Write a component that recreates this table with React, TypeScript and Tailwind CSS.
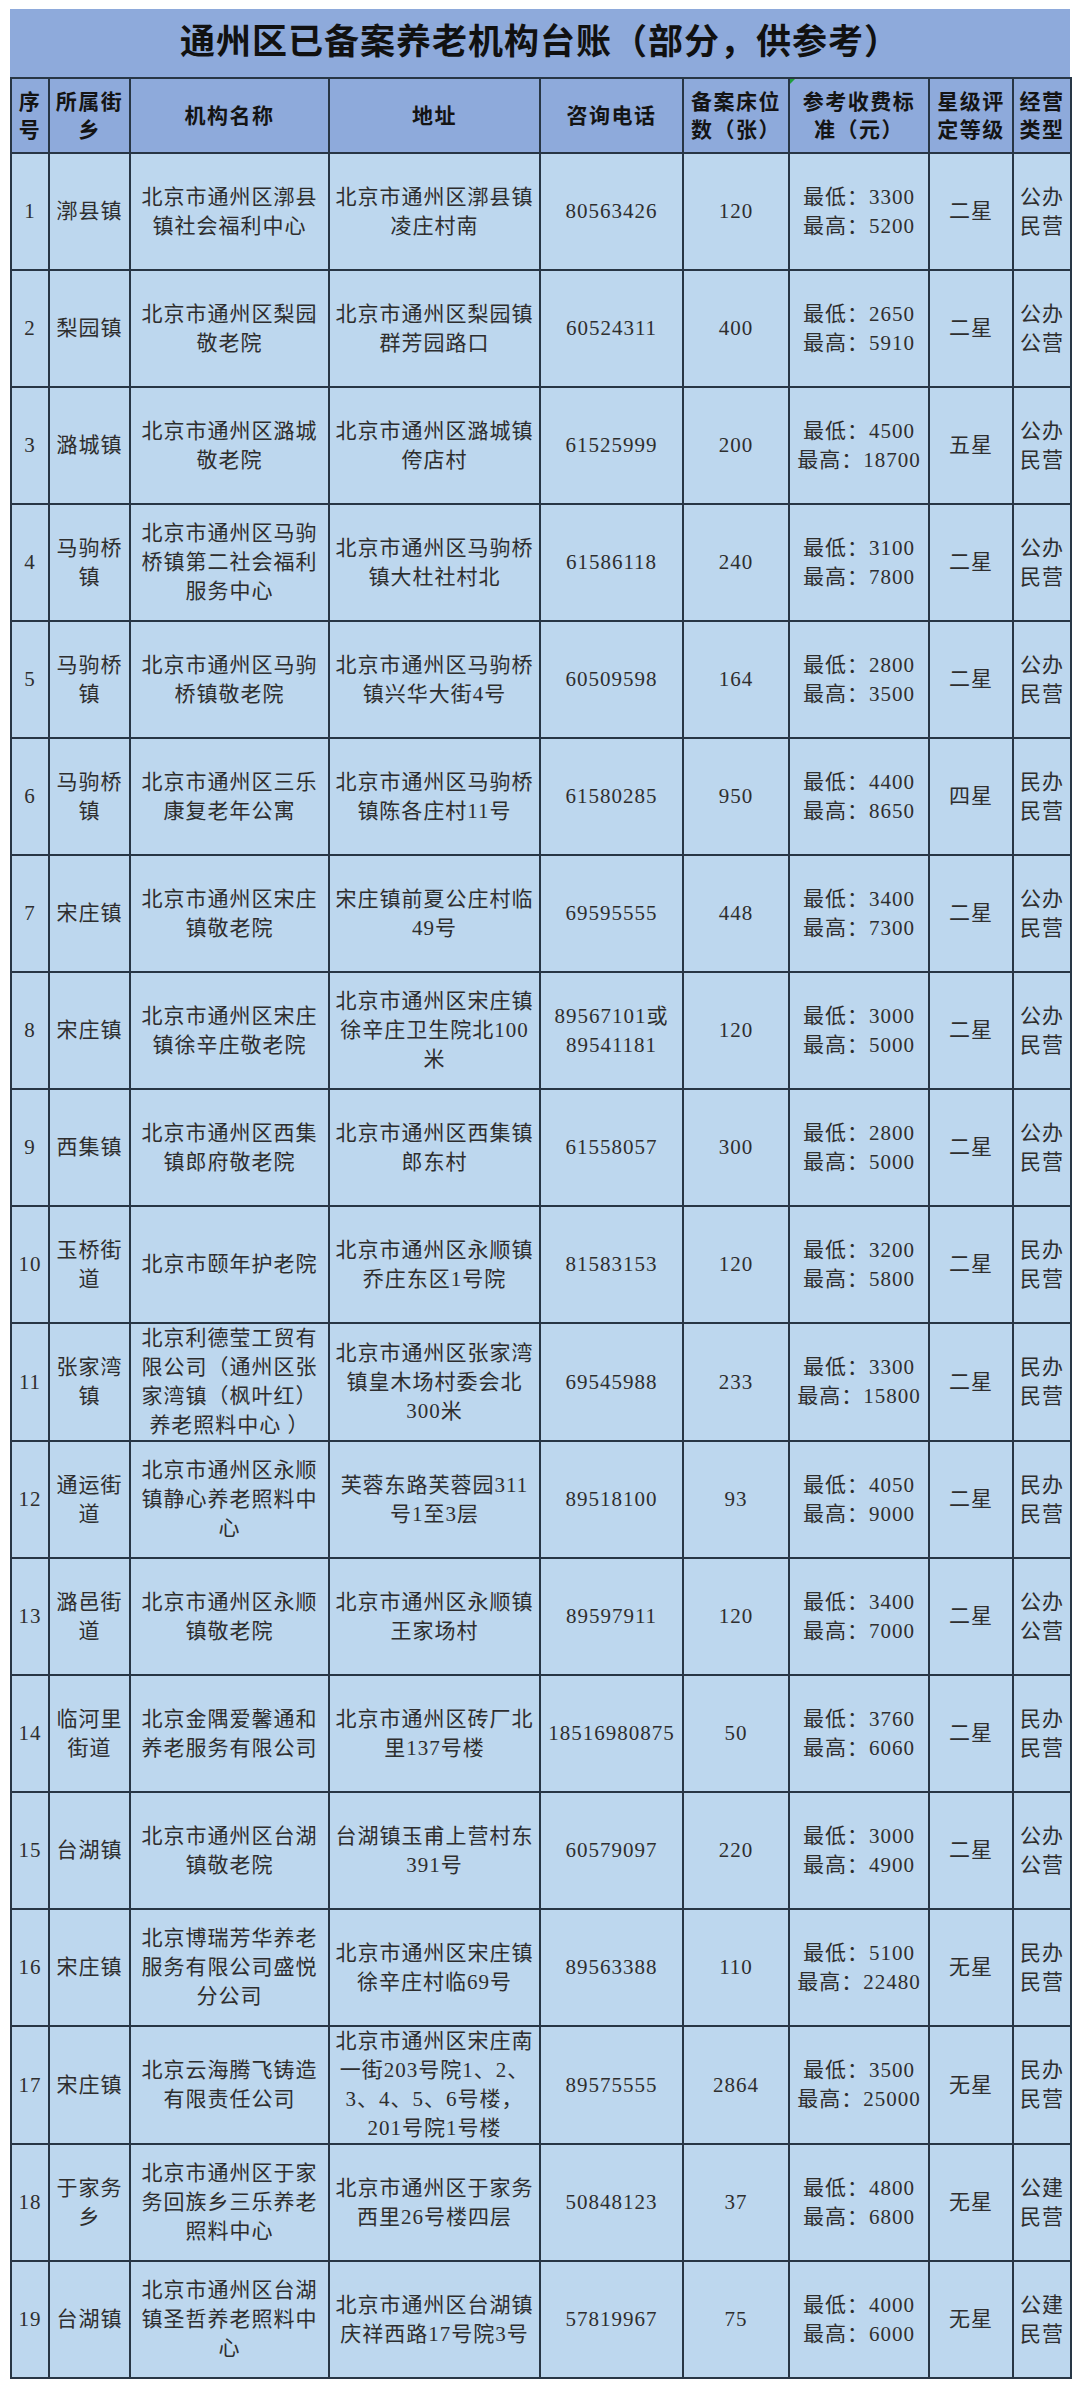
type Row = {
  no: number;
  town: string;
  name: string;
  addr: string;
  phone: string;
  beds: string;
  low: string;
  high: string;
  star: string;
  kind: string;
};

const rows: Row[] = [
  { no: 1, town: "漷县镇", name: "北京市通州区漷县镇社会福利中心", addr: "北京市通州区漷县镇凌庄村南", phone: "80563426", beds: "120", low: "3300", high: "5200", star: "二星", kind: "公办民营" },
  { no: 2, town: "梨园镇", name: "北京市通州区梨园敬老院", addr: "北京市通州区梨园镇群芳园路口", phone: "60524311", beds: "400", low: "2650", high: "5910", star: "二星", kind: "公办公营" },
  { no: 3, town: "潞城镇", name: "北京市通州区潞城敬老院", addr: "北京市通州区潞城镇侉店村", phone: "61525999", beds: "200", low: "4500", high: "18700", star: "五星", kind: "公办民营" },
  { no: 4, town: "马驹桥镇", name: "北京市通州区马驹桥镇第二社会福利服务中心", addr: "北京市通州区马驹桥镇大杜社村北", phone: "61586118", beds: "240", low: "3100", high: "7800", star: "二星", kind: "公办民营" },
  { no: 5, town: "马驹桥镇", name: "北京市通州区马驹桥镇敬老院", addr: "北京市通州区马驹桥镇兴华大街4号", phone: "60509598", beds: "164", low: "2800", high: "3500", star: "二星", kind: "公办民营" },
  { no: 6, town: "马驹桥镇", name: "北京市通州区三乐康复老年公寓", addr: "北京市通州区马驹桥镇陈各庄村11号", phone: "61580285", beds: "950", low: "4400", high: "8650", star: "四星", kind: "民办民营" },
  { no: 7, town: "宋庄镇", name: "北京市通州区宋庄镇敬老院", addr: "宋庄镇前夏公庄村临49号", phone: "69595555", beds: "448", low: "3400", high: "7300", star: "二星", kind: "公办民营" },
  { no: 8, town: "宋庄镇", name: "北京市通州区宋庄镇徐辛庄敬老院", addr: "北京市通州区宋庄镇徐辛庄卫生院北100米", phone: "89567101或89541181", beds: "120", low: "3000", high: "5000", star: "二星", kind: "公办民营" },
  { no: 9, town: "西集镇", name: "北京市通州区西集镇郎府敬老院", addr: "北京市通州区西集镇郎东村", phone: "61558057", beds: "300", low: "2800", high: "5000", star: "二星", kind: "公办民营" },
  { no: 10, town: "玉桥街道", name: "北京市颐年护老院", addr: "北京市通州区永顺镇乔庄东区1号院", phone: "81583153", beds: "120", low: "3200", high: "5800", star: "二星", kind: "民办民营" },
  { no: 11, town: "张家湾镇", name: "北京利德莹工贸有限公司（通州区张家湾镇（枫叶红）养老照料中心 ）", addr: "北京市通州区张家湾镇皇木场村委会北300米", phone: "69545988", beds: "233", low: "3300", high: "15800", star: "二星", kind: "民办民营" },
  { no: 12, town: "通运街道", name: "北京市通州区永顺镇静心养老照料中心", addr: "芙蓉东路芙蓉园311号1至3层", phone: "89518100", beds: "93", low: "4050", high: "9000", star: "二星", kind: "民办民营" },
  { no: 13, town: "潞邑街道", name: "北京市通州区永顺镇敬老院", addr: "北京市通州区永顺镇王家场村", phone: "89597911", beds: "120", low: "3400", high: "7000", star: "二星", kind: "公办公营" },
  { no: 14, town: "临河里街道", name: "北京金隅爱馨通和养老服务有限公司", addr: "北京市通州区砖厂北里137号楼", phone: "18516980875", beds: "50", low: "3760", high: "6060", star: "二星", kind: "民办民营" },
  { no: 15, town: "台湖镇", name: "北京市通州区台湖镇敬老院", addr: "台湖镇玉甫上营村东391号", phone: "60579097", beds: "220", low: "3000", high: "4900", star: "二星", kind: "公办公营" },
  { no: 16, town: "宋庄镇", name: "北京博瑞芳华养老服务有限公司盛悦分公司", addr: "北京市通州区宋庄镇徐辛庄村临69号", phone: "89563388", beds: "110", low: "5100", high: "22480", star: "无星", kind: "民办民营" },
  { no: 17, town: "宋庄镇", name: "北京云海腾飞铸造有限责任公司", addr: "北京市通州区宋庄南一街203号院1、2、3、4、5、6号楼，201号院1号楼", phone: "89575555", beds: "2864", low: "3500", high: "25000", star: "无星", kind: "民办民营" },
  { no: 18, town: "于家务乡", name: "北京市通州区于家务回族乡三乐养老照料中心", addr: "北京市通州区于家务西里26号楼四层", phone: "50848123", beds: "37", low: "4800", high: "6800", star: "无星", kind: "公建民营" },
  { no: 19, town: "台湖镇", name: "北京市通州区台湖镇圣哲养老照料中心", addr: "北京市通州区台湖镇庆祥西路17号院3号", phone: "57819967", beds: "75", low: "4000", high: "6000", star: "无星", kind: "公建民营" },
];

const th =
  "border-2 border-[#283645] bg-[#8eaadb] px-[4px] text-center align-middle font-semibold leading-[28px] text-[#141414]";
const td =
  "border-2 border-[#283645] bg-[#bdd7ee] text-center align-middle leading-[29px] text-[#2e2e2e]";

export default function App() {
  return (
    <div className="min-h-[2384px] bg-white px-[10px] pt-[9px] font-['Liberation_Serif','Noto_Sans_CJK_SC',serif] text-[21px] tracking-[1px]">
      {/* title band */}
      <div className="flex h-[68px] items-center justify-center bg-[#8eaadb]">
        <h1 className="text-[35px] font-bold tracking-[1px] text-[#111]">
          通州区已备案养老机构台账（部分，供参考）
        </h1>
      </div>

      <table className="w-full table-fixed border-collapse">
        <colgroup>
          <col className="w-[38px]" />
          <col className="w-[81px]" />
          <col className="w-[199px]" />
          <col className="w-[211px]" />
          <col className="w-[143px]" />
          <col className="w-[106px]" />
          <col className="w-[140px]" />
          <col className="w-[84px]" />
          <col className="w-[58px]" />
        </colgroup>
        <thead>
          <tr className="h-[75px] tracking-[1.5px]">
            <th className={th}>序号</th>
            <th className={th}>所属街乡</th>
            <th className={th}>机构名称</th>
            <th className={th}>地址</th>
            <th className={th}>咨询电话</th>
            <th className={th}>备案床位数（张）</th>
            <th className={`${th} relative`}>
              <span className="absolute left-0 top-0 h-0 w-0 border-r-[5px] border-t-[5px] border-r-transparent border-t-[#1f9d3a]" />
              参考收费标准（元）
            </th>
            <th className={th}>星级评定等级</th>
            <th className={th}>经营类型</th>
          </tr>
        </thead>
        <tbody>
          {rows.map((r) => (
            <tr key={r.no} className="h-[117px]">
              <td className={`${td} px-0`}>{r.no}</td>
              <td className={`${td} px-[3px]`}>{r.town}</td>
              <td className={`${td} px-[5px]`}>{r.name}</td>
              <td className={`${td} px-[4px]`}>{r.addr}</td>
              <td className={`${td} px-[3px]`}>{r.phone}</td>
              <td className={`${td} px-[3px]`}>{r.beds}</td>
              <td className={`${td} px-[3px]`}>
                <div>最低：{r.low}</div>
                <div>最高：{r.high}</div>
              </td>
              <td className={`${td} px-[3px]`}>{r.star}</td>
              <td className={`${td} px-[3px]`}>{r.kind}</td>
            </tr>
          ))}
        </tbody>
      </table>
    </div>
  );
}
